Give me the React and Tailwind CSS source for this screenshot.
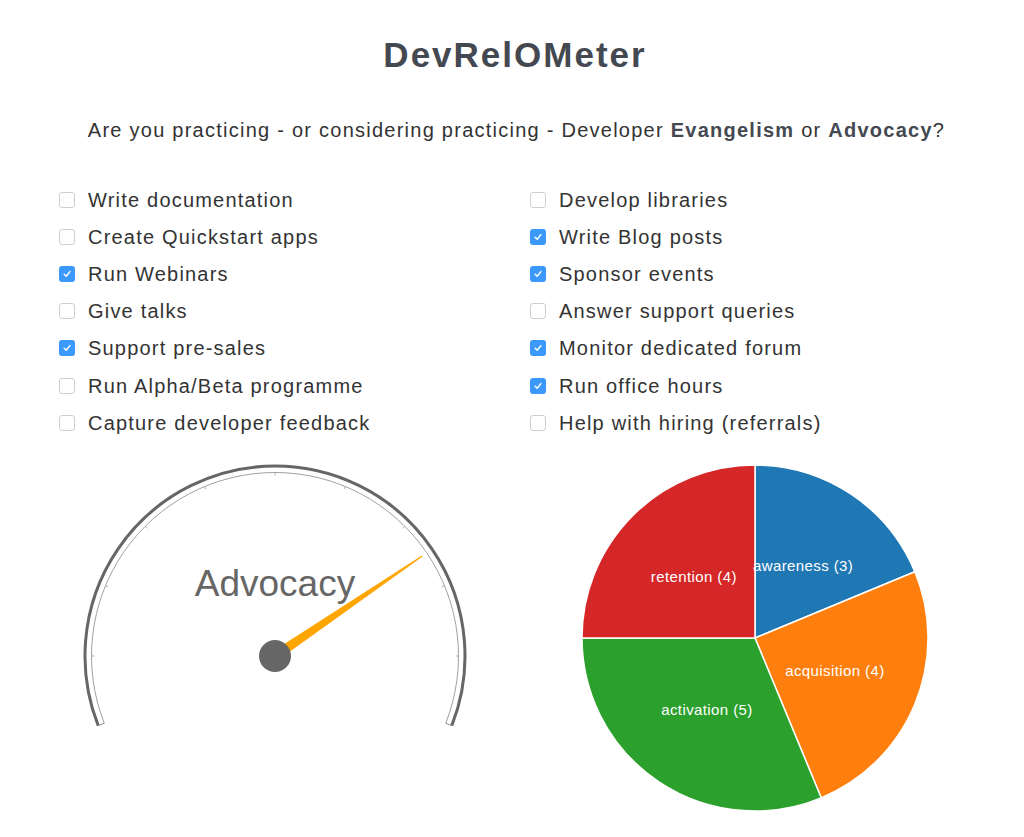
import React from 'react';

const LEFT = [
  ['Write documentation', false],
  ['Create Quickstart apps', false],
  ['Run Webinars', true],
  ['Give talks', false],
  ['Support pre-sales', true],
  ['Run Alpha/Beta programme', false],
  ['Capture developer feedback', false],
];

const RIGHT = [
  ['Develop libraries', false],
  ['Write Blog posts', true],
  ['Sponsor events', true],
  ['Answer support queries', false],
  ['Monitor dedicated forum', true],
  ['Run office hours', true],
  ['Help with hiring (referrals)', false],
];

const SLICES = [
  { label: 'awareness', value: 3, color: '#1f77b4' },
  { label: 'acquisition', value: 4, color: '#ff7f0e' },
  { label: 'activation', value: 5, color: '#2ca02c' },
  { label: 'retention', value: 4, color: '#d62728' },
];

// angle in degrees, measured clockwise from 12 o'clock
const pt = (cx, cy, r, deg) => {
  const a = (deg * Math.PI) / 180;
  return [cx + r * Math.sin(a), cy - r * Math.cos(a)];
};

function Checkbox({ checked }) {
  if (checked) {
    return (
      <span className="flex h-4 w-4 shrink-0 items-center justify-center rounded-[3px] bg-[#3b99fc]">
        <svg width="10" height="10" viewBox="0 0 10 10">
          <path d="M2.2 5.2 L4.2 7.3 L7.9 2.6" fill="none" stroke="white" strokeWidth="1.5" strokeLinecap="round" strokeLinejoin="round" />
        </svg>
      </span>
    );
  }
  return <span className="block h-4 w-4 shrink-0 rounded-[3px] border border-[#cfcfcf] bg-white" />;
}

function Item({ label, checked }) {
  return (
    <label className="flex h-[37.2px] items-center gap-[13px]">
      <Checkbox checked={checked} />
      <span className="text-[20px] leading-[20px] tracking-[1.2px] text-[#333]">{label}</span>
    </label>
  );
}

function Gauge() {
  const cx = 200;
  const cy = 200;
  const ro = 190;
  const ri = 183.5;
  const start = -111.5;
  const end = 111.5;
  const [ox1, oy1] = pt(cx, cy, ro, start);
  const [ox2, oy2] = pt(cx, cy, ro, end);
  const [ix1, iy1] = pt(cx, cy, ri, start);
  const [ix2, iy2] = pt(cx, cy, ri, end);
  const ticks = [];
  for (let d = -90; d <= 90; d += 22.5) ticks.push(d);
  const needle = 55.8;
  const [tx, ty] = pt(cx, cy, 178, needle);
  const [b1x, b1y] = pt(cx, cy, 5, needle - 90);
  const [b2x, b2y] = pt(cx, cy, 5, needle + 90);
  const [t1x, t1y] = pt(tx, ty, 0.6, needle - 90);
  const [t2x, t2y] = pt(tx, ty, 0.6, needle + 90);

  return (
    <svg width="400" height="290" viewBox="0 0 400 290" className="shrink-0">
      <path d={`M${ox1} ${oy1} A${ro} ${ro} 0 1 1 ${ox2} ${oy2}`} fill="none" stroke="#666" strokeWidth="3" />
      <path d={`M${ix1} ${iy1} A${ri} ${ri} 0 1 1 ${ix2} ${iy2}`} fill="none" stroke="#a0a0a0" strokeWidth="1" />
      <line x1={ix1} y1={iy1} x2={ox1} y2={oy1} stroke="#888" strokeWidth="1" />
      <line x1={ix2} y1={iy2} x2={ox2} y2={oy2} stroke="#888" strokeWidth="1" />
      {ticks.map((d) => {
        const [x1, y1] = pt(cx, cy, ri, d);
        const [x2, y2] = pt(cx, cy, ri - 3, d);
        return <line key={d} x1={x1} y1={y1} x2={x2} y2={y2} stroke="#b0b0b0" strokeWidth="1" />;
      })}
      <text
        x={cx}
        y={140}
        textAnchor="middle"
        fill="#666"
        fontSize="37"
        style={{ fontFamily: '"Liberation Sans", Arial, sans-serif' }}
      >
        Advocacy
      </text>
      <polygon points={`${b1x},${b1y} ${t1x},${t1y} ${t2x},${t2y} ${b2x},${b2y}`} fill="#ffa500" />
      <circle cx={cx} cy={cy} r="16" fill="#666" />
    </svg>
  );
}

function Pie() {
  const cx = 180;
  const cy = 180;
  const r = 173;
  const total = SLICES.reduce((s, x) => s + x.value, 0);
  let acc = 0;
  const arcs = SLICES.map((s) => {
    const a0 = (acc / total) * 360;
    acc += s.value;
    const a1 = (acc / total) * 360;
    const [x0, y0] = pt(cx, cy, r, a0);
    const [x1, y1] = pt(cx, cy, r, a1);
    const large = a1 - a0 > 180 ? 1 : 0;
    const [lx, ly] = pt(cx, cy, r / 2, (a0 + a1) / 2);
    return { ...s, d: `M${cx} ${cy} L${x0} ${y0} A${r} ${r} 0 ${large} 1 ${x1} ${y1} Z`, lx, ly };
  });

  return (
    <svg width="360" height="360" viewBox="0 0 360 360" className="mt-[2px] shrink-0">
      {arcs.map((a) => (
        <path key={a.label} d={a.d} fill={a.color} stroke="white" strokeWidth="1.5" />
      ))}
      {arcs.map((a) => (
        <text
          key={a.label + '-t'}
          x={a.lx}
          y={a.ly + 5}
          textAnchor="middle"
          fill="white"
          fontSize="15"
          letterSpacing="0.4"
          style={{ fontFamily: '"Liberation Sans", Arial, sans-serif' }}
        >
          {a.label} ({a.value})
        </text>
      ))}
    </svg>
  );
}

export default function App() {
  return (
    <div className="min-h-screen w-full bg-white font-['Liberation_Sans',Arial,sans-serif] text-[#333]">
      <h1 className="pl-[6px] pt-[37px] text-center text-[35px] font-bold leading-[35px] tracking-[2px] text-[#444951]">
        DevRelOMeter
      </h1>
      <p className="mt-[48px] pl-[9px] text-center text-[20px] leading-[20px] tracking-[1.25px] text-[#333]">
        Are you practicing - or considering practicing - Developer <b className="text-[#444951]">Evangelism</b> or{' '}
        <b className="text-[#444951]">Advocacy</b>?
      </p>
      <div className="mt-[41px] grid grid-cols-[471px_1fr] pl-[59px]">
        <div className="flex flex-col">
          {LEFT.map(([l, c]) => (
            <Item key={l} label={l} checked={c} />
          ))}
        </div>
        <div className="flex flex-col">
          {RIGHT.map(([l, c]) => (
            <Item key={l} label={l} checked={c} />
          ))}
        </div>
      </div>
      <div className="mt-[15px] flex items-start gap-[100px] pl-[75px]">
        <Gauge />
        <Pie />
      </div>
    </div>
  );
}
